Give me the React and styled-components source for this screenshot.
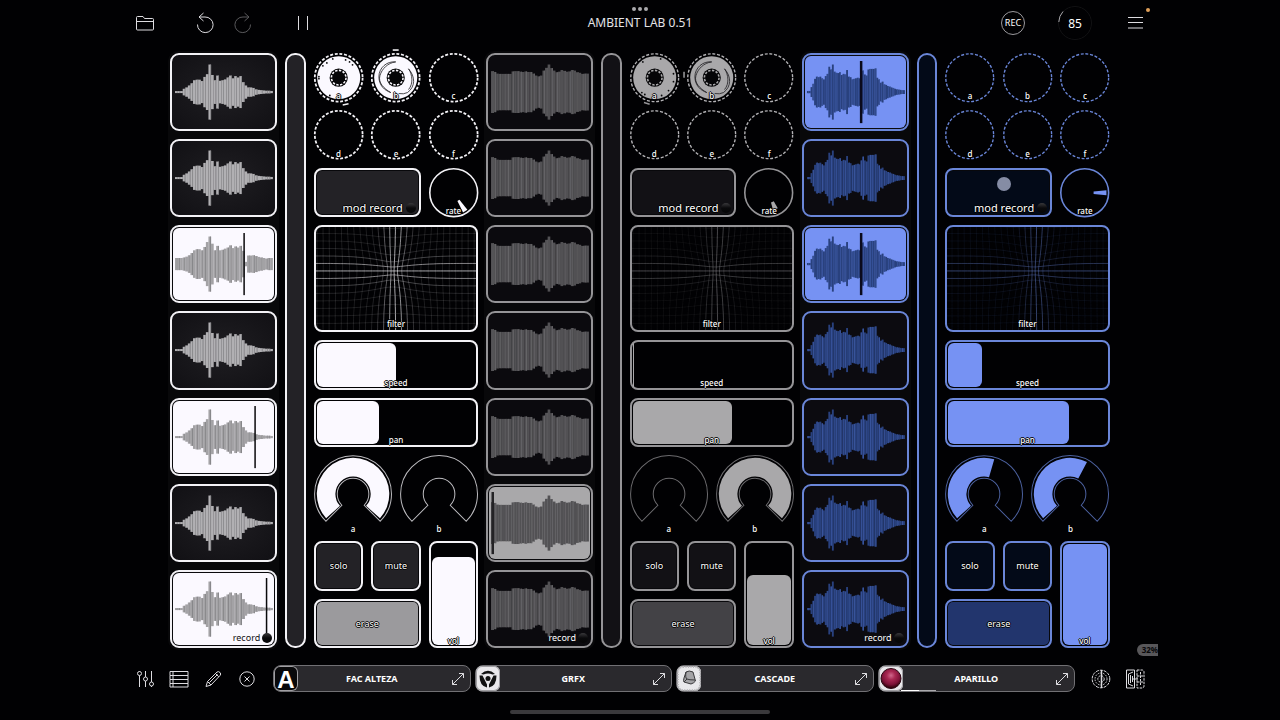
// App.jsx
import React, { useState } from 'react';
import styled, { createGlobalStyle, ThemeProvider } from 'styled-components';

const GlobalStyle = createGlobalStyle`
  * {
    box-sizing: border-box;
  }

  body {
    margin: 0;
    background: #000;
    color: #fff;
    font-family: 'Noto Sans', 'Open Sans', sans-serif;
  }

  button {
    margin: 0;
    padding: 0;
    border: none;
    background: none;
    color: inherit;
    font: inherit;
    cursor: pointer;
  }

  svg {
    display: block;
  }
`;

const themes = {
  white: {
    line: '#f3f2f6',
    thin: '#bdbcc0',
    fill: '#fbf9ff',
    button: '#232226',
    pad: 'radial-gradient(#1f1e22, #111014)',
    erase: '#9b9a9d',
    wave: '#b1b0b3',
    waveLow: '#7c7b7e',
    head: '#0a0a0c',
  },
  gray: {
    line: '#959497',
    thin: '#6c6b6e',
    fill: '#a9a8aa',
    button: '#121115',
    pad: '#0b0a0e',
    erase: '#434246',
    wave: '#525154',
    waveLow: '#6f6e71',
    head: '#242326',
  },
  blue: {
    line: '#6a86d8',
    thin: '#4c619f',
    fill: '#7692f3',
    button: '#030a18',
    pad: '#0c0b10',
    erase: '#22356d',
    wave: '#29417e',
    waveLow: '#3f5ca8',
    head: '#0a0a1c',
  },
};

const Page = styled.div`
  position: relative;
  display: flex;
  flex-direction: column;
  height: 100vh;
  min-height: 560px;
  background: #010103;
`;

const Header = styled.header`
  display: grid;
  grid-template-columns: 1fr auto 1fr;
  align-items: center;
  height: 49px;
  padding: 0 135px 3px;
`;

const Tools = styled.div`
  display: flex;
  align-items: center;
  justify-content: ${(props) => (props.$end ? 'flex-end' : 'flex-start')};
  gap: ${(props) => props.$gap};
`;

const IconButton = styled.button`
  width: 20px;
  height: 20px;
  opacity: ${(props) => (props.disabled ? 0.4 : 1)};

  svg {
    width: 20px;
    height: 20px;
    fill: none;
    stroke: #dddce0;
    stroke-width: 1;
    overflow: visible;
  }
`;

const Title = styled.h1`
  position: relative;
  margin: 0;
  color: #e4e3e7;
  font-size: 12px;
  font-weight: 400;
  line-height: 16px;
`;

const Dots = styled.span`
  position: absolute;
  top: -8px;
  left: 0;
  right: 0;
  display: flex;
  justify-content: center;
  gap: 2px;

  i {
    width: 4px;
    height: 4px;
    border-radius: 50%;
    background: #aaa9ad;
  }
`;

const RecButton = styled.button`
  width: 24px;
  height: 24px;
  border: 1px solid #9a999d;
  border-radius: 50%;
  font-size: 9px;
  line-height: 22px;
`;

const Tempo = styled.button`
  display: grid;
  place-items: center;
  width: 34px;
  height: 34px;
  font-size: 12px;

  > * {
    grid-area: 1 / 1;
  }
`;

const MicDot = styled.span`
  position: absolute;
  top: 8px;
  right: 130px;
  width: 4px;
  height: 4px;
  border-radius: 50%;
  background: #e0a05a;
`;

const Stage = styled.main`
  flex: 1;
  display: grid;
  grid-template-columns: repeat(3, minmax(0, 1fr));
  grid-template-rows: minmax(0, 1fr);
  width: 74%;
  min-height: 0;
  margin: 0 auto;
`;

const Strip = styled.section`
  display: grid;
  grid-template-columns: 4fr 1fr 6fr;
  grid-template-rows: minmax(0, 1fr);
`;

const Pads = styled.div`
  display: grid;
  grid-template-rows: repeat(7, minmax(0, 1fr));
  gap: 8px;
  margin: 2px;
  padding: 2px;
  border-radius: 10px;
  background: #08080a;
`;

const PadButton = styled.button`
  position: relative;
  padding: 1px;
  border: 2px solid ${(props) => props.theme.line};
  border-radius: 9px;
  background: ${(props) => (props.$active ? '#0a0a0d' : props.theme.pad)};
`;

const PadFace = styled.span`
  display: block;
  height: 100%;
  border-radius: 6px;
  background: ${(props) => (props.$active ? props.theme.fill : 'transparent')};

  svg {
    width: 100%;
    height: 100%;
  }
`;

const PadLabel = styled.span`
  position: absolute;
  right: 3px;
  bottom: 3px;
  display: flex;
  align-items: center;
  gap: 2px;
  font-size: 9px;
  line-height: 10px;
  color: ${(props) => (props.$dark ? '#111' : '#fff')};
`;

const Ball = styled.i`
  width: 10px;
  height: 10px;
  border-radius: 50%;
  background: linear-gradient(#39383b, #0a0a0c 50%, #050506);
`;

const Lane = styled.div`
  margin: 4px;
  border: 2px solid ${(props) => props.theme.line};
  border-radius: 10px;
  background: ${(props) => props.theme.button};
`;

const Controls = styled.div`
  display: grid;
  grid-template-columns: repeat(6, minmax(0, 1fr));
  grid-template-rows:
    repeat(3, minmax(0, 2fr)) minmax(0, 4fr) repeat(2, minmax(0, 2fr))
    minmax(0, 3fr) repeat(2, minmax(0, 2fr));

  > * {
    grid-column: span 2;
    min-width: 0;
    min-height: 0;
    margin: 4px;
  }
`;

const Label = styled.span`
  align-self: end;
  justify-self: center;
  font-size: 8px;
  font-weight: 500;
  line-height: ${(props) => (props.$tall ? '12px' : '9px')};
  text-shadow: 1px 0 #000, -1px 0 #000, 0 1px #000, 0 -1px #000;
  pointer-events: none;
`;

const Dial = styled.button`
  display: grid;
  grid-template-rows: minmax(0, 1fr);

  > * {
    grid-area: 1 / 1;
  }

  svg {
    width: 100%;
    height: 100%;
    overflow: visible;
  }
`;

const Box = styled.button`
  position: relative;
  && {
    grid-column: span ${(props) => props.$span || 2};
  }
  border: 2px solid ${(props) => props.theme.line};
  border-radius: 8px;
  background: ${(props) => (props.$erase ? props.theme.erase : props.theme.button)};
  box-shadow: inset 0 0 0 1px #08080b;
  font-size: 9px;
  text-shadow: 1px 0 #000, -1px 0 #000, 0 1px #000, 0 -1px #000;
`;

const ModLabel = styled(PadLabel)`
  bottom: 0;
  gap: 3px;
  font-size: 11px;
  line-height: 14px;
`;

const Touch = styled.i`
  position: absolute;
  top: 15%;
  left: 48%;
  width: 14px;
  height: 14px;
  border-radius: 50%;
  background: #858ca4;
`;

const FilterBox = styled.div`
  && {
    grid-column: span 6;
  }
  display: grid;
  grid-template-rows: minmax(0, 1fr);
  overflow: hidden;
  border: 2px solid ${(props) => props.theme.line};
  border-radius: 8px;

  > * {
    grid-area: 1 / 1;
  }

  svg {
    width: 100%;
    height: 100%;
  }
`;

const SliderBox = styled.label`
  && {
    grid-column: span ${(props) => (props.$vertical ? 2 : 6)};
    grid-row: span ${(props) => (props.$vertical ? 2 : 1)};
  }
  display: grid;
  grid-template-rows: minmax(0, 1fr);
  padding: 1px;
  border: 2px solid ${(props) => props.theme.line};
  border-radius: 8px;

  > * {
    grid-area: 1 / 1;
  }
`;

const Fill = styled.span`
  align-self: end;
  border-radius: 6px;
  background: ${(props) => props.theme.fill};
`;

const Range = styled.input`
  width: 100%;
  height: 100%;
  min-width: 0;
  margin: 0;
  opacity: 0;
  writing-mode: ${(props) => (props.$vertical ? 'vertical-lr' : 'horizontal-tb')};
  direction: ${(props) => (props.$vertical ? 'rtl' : 'ltr')};
`;

const KnobBox = styled.label`
  && {
    grid-column: span 3;
  }
  display: grid;
  grid-template-rows: minmax(0, 1fr);

  > * {
    grid-area: 1 / 1;
  }

  svg {
    width: 100%;
    height: 100%;
    overflow: visible;
  }
`;

const Footer = styled.footer`
  display: flex;
  align-items: center;
  gap: 16px;
  height: 68px;
  padding: 0 135px 15px;
`;

const Tabs = styled.nav`
  flex: 1;
  display: grid;
  grid-template-columns: repeat(4, 1fr);
  gap: 4px;
`;

const Tab = styled.button`
  position: relative;
  display: grid;
  grid-template-columns: 24px 1fr 24px;
  align-items: center;
  height: 27px;
  border: 1px solid #717074;
  border-radius: 8px;
  background: #2a292d;
  font-size: 9px;
  font-weight: 700;

  > svg {
    justify-self: center;
    width: 14px;
    height: 14px;
  }
`;

const AppIcon = styled.span`
  display: grid;
  place-items: center;
  width: 24px;
  height: 25px;
  border-radius: 6px;
  background: ${(props) => (props.$dark ? '#08080a' : '#e9e8eb')};
  box-shadow: inset 0 0 0 1px #a09fa3;
  font-family: 'Liberation Sans', sans-serif;
  font-size: 24px;
  line-height: 28px;
`;

const Progress = styled.i`
  position: absolute;
  bottom: 0;
  left: 22px;
  width: 35px;
  height: 1px;
  background: linear-gradient(90deg, #fff 50%, #aaa9ad 50%);
`;

const Battery = styled.span`
  position: absolute;
  right: 122px;
  bottom: 64px;
  padding-left: 5px;
  border-radius: 6px 0 0 6px;
  background: #58575a;
  color: #08080a;
  font-size: 8px;
  font-weight: 700;
  line-height: 12px;
`;

const HomeBar = styled.i`
  position: absolute;
  bottom: 6px;
  left: 50%;
  width: 260px;
  height: 4px;
  margin-left: -130px;
  border-radius: 2px;
  background: #3a393c;
`;

// half heights of the bars, out of 100
const waves = {
  white: [
    3, 3, 3, 12, 17, 24, 32, 43, 45, 45, 40, 55, 65, 100, 62, 43, 60, 41, 43, 46, 53, 60, 50, 58, 53, 58, 36,
    24, 17, 17, 15, 10, 8, 7, 6, 5, 5, 4,
  ],
  held: [
    22, 22, 22, 24, 27, 32, 40, 50, 54, 54, 50, 62, 80, 100, 74, 50, 66, 50, 52, 56, 60, 68, 58, 64, 60, 66, 48,
    8, 31, 31, 32, 29, 26, 24, 22, 20, 22, 22,
  ],
  gray: [
    76, 73, 67, 66, 66, 66, 66, 66, 75, 76, 76, 74, 73, 75, 73, 73, 67, 60, 57, 60, 78, 88, 100, 87, 78, 72, 74,
    80, 77, 74, 75, 80, 78, 72, 70, 66, 67, 67,
  ],
  blue: [
    4, 4, 18, 30, 48, 56, 54, 56, 50, 46, 58, 66, 92, 82, 100, 74, 70, 69, 72, 62, 66, 64, 80, 56, 54, 46, 48,
    50, 52, 50, 64, 78, 64, 60, 82, 84, 84, 84, 86, 52, 46, 34, 38, 28, 26, 22, 20, 17, 15, 12, 10, 9, 8, 7, 7,
  ],
};

const Wave = ({ kind, tone, head, headWidth = 1.5, active }) => {
  const bars = waves[kind];
  const step = 98 / bars.length;
  const theme = themes[tone];
  return (
    <svg viewBox="0 0 101 72" preserveAspectRatio="none" aria-hidden="true">
      {bars.map((value, i) => {
        const h = Math.max(1, value * 0.275);
        const x = 2 + i * step;
        const dark = active && tone === 'white';
        return (
          <g key={i}>
            <rect x={x} y={36 - h} width={step + 0.1} height={h * 2} fill={dark ? '#a3a2a5' : theme.wave} />
            {(i * 7) % 5 < 3 && (
              <rect x={x + step - 0.7} y={36 - h} width="0.7" height={h * 2} fill={theme.waveLow} />
            )}
          </g>
        );
      })}
      {head !== undefined && <rect x={head} y="5" width={headWidth} height="62" fill={theme.head} />}
    </svg>
  );
};

const strips = [
  {
    tone: 'white',
    pads: [
      {},
      {},
      { active: true, head: 70.5, kind: 'held' },
      {},
      { active: true, head: 81.5 },
      {},
      { active: true, head: 93 },
    ],
    discs: true,
    ticks: [[7, 27, -12], [0, -28, 0]],
    rate: 58,
    warp: 76,
    speed: 50,
    pan: 39,
    a: 1,
    b: 0,
    vol: 87,
  },
  {
    tone: 'gray',
    pads: [{}, {}, {}, {}, {}, { active: true, head: 2.5, headWidth: 2.5 }, {}],
    discs: true,
    ticks: [[-8, 26, 16], [-28, -3, 90]],
    rate: 68,
    warp: 82,
    speed: 1,
    pan: 63,
    a: 0,
    b: 1,
    vol: 69,
  },
  {
    tone: 'blue',
    pads: [{ active: true, head: 55, headWidth: 2.5 }, {}, { active: true, head: 55, headWidth: 2.5 }, {}, {}, {}, {}],
    ticks: [],
    rate: 0,
    warp: 86,
    touch: true,
    speed: 21,
    pan: 76,
    a: 0.567,
    b: 0.61,
    vol: 100,
  },
];

const discDots = {
  white: [[-16, -12], [-12, -15], [-6, -19], [7, -18], [11, -16], [14, -13], [-20, 1], [-20, -1], [-9, 18]],
  gray: [[-12, -16], [6, -19], [19, -4], [19, 4], [14, 13], [7, 18], [-13, 15], [-10, 17]],
};

const ModCircle = ({ name, strip, index }) => {
  const t = themes[strip.tone];
  const disc = strip.discs && index < 2;
  const tick = strip.ticks[index];
  return (
    <Dial aria-label={`modulator ${name}`}>
      <svg viewBox="-25 -25 50 50" aria-hidden="true">
        {disc && <circle r="21.8" fill={t.fill} />}
        {disc && <circle r="9.2" fill="#050507" />}
        {disc && <circle r="7.4" fill="none" stroke={t.fill} strokeWidth="1.6" strokeDasharray="2.4 1.475" />}
        {disc && index === 0 &&
          discDots[strip.tone].map(([x, y]) => <circle key={`${x},${y}`} cx={x} cy={y} r="0.9" fill="#08080a" />)}
        {disc && index === 1 && (
          <g fill="none" stroke="#1c1b1e" strokeWidth="0.8">
            <path d="M0-16C-9-17-17-10-17-1S-11 13-5 15" />
            <path d="M0-16C-8-15-14-9-16-2S-12 11-5 15" />
            <path d="M13-9C20-1 20 9 12 15Q8 17 3 16" />
            <path d="M13-9C17-3 18 6 13 12" />
          </g>
        )}
        <circle
          r="24.2"
          fill="none"
          stroke={strip.tone === 'gray' ? '#b4b3b6' : t.line}
          strokeWidth={strip.tone === 'white' ? 1.8 : 1.4}
          strokeDasharray="3 1.751"
        />
        {tick && (
          <rect
            x="-3"
            y="-0.8"
            width="6"
            height="1.6"
            fill={t.line}
            transform={`translate(${tick[0]} ${tick[1]}) rotate(${tick[2]})`}
          />
        )}
      </svg>
      <Label $tall>{name}</Label>
    </Dial>
  );
};

const FilterGrid = ({ tone, cx }) => {
  const cy = 44;
  const pull = (x, y) => {
    const r2 = (x - cx) ** 2 + (y - cy) ** 2;
    const k = 1 - 0.5 * Math.exp(-r2 / 900);
    return `${(cx + (x - cx) * k).toFixed(1)},${(cy + (y - cy) * k).toFixed(1)}`;
  };
  const strength = tone === 'white' ? 1 : 0.7;
  const alpha = (d) => strength * (0.14 + 0.72 * Math.exp(-(d * d) / 170));
  const lines = [];
  for (let i = -16; i <= 16; i += 1) {
    const x = cx + 3 + i * 6;
    const y = cy + i * 7.5;
    const down = [];
    const across = [];
    for (let s = -4; s <= 110; s += 3) down.push(pull(x, s));
    for (let s = -4; s <= 166; s += 3) across.push(pull(s, y));
    lines.push(<polyline key={`v${i}`} points={down.join(' ')} strokeOpacity={alpha(Math.abs(i) * 6)} />);
    lines.push(<polyline key={`h${i}`} points={across.join(' ')} strokeOpacity={alpha(Math.abs(i) * 7.5)} />);
  }
  return (
    <svg viewBox="0 0 159 103" preserveAspectRatio="none" aria-hidden="true">
      <g fill="none" stroke={themes[tone].line} strokeWidth="0.8">
        {lines}
      </g>
    </svg>
  );
};

const Slider = ({ name, value, vertical }) => {
  const [current, setCurrent] = useState(value);
  return (
    <SliderBox $vertical={vertical}>
      <Fill style={vertical ? { height: `${current}%` } : { width: `${current}%`, height: '100%' }} />
      <Range type="range" $vertical={vertical} value={current} onChange={(e) => setCurrent(Number(e.target.value))} />
      <Label>{name}</Label>
    </SliderBox>
  );
};

const ring = (from, to, outer, inner) => {
  const at = (deg, r) => {
    const a = (deg * Math.PI) / 180;
    return `${(Math.cos(a) * r).toFixed(2)} ${(Math.sin(a) * r).toFixed(2)}`;
  };
  const large = to - from > 180 ? 1 : 0;
  return `M${at(from, outer)}A${outer} ${outer} 0 ${large} 1 ${at(to, outer)}L${at(to, inner)}A${inner} ${inner} 0 ${large} 0 ${at(from, inner)}Z`;
};

const Knob = ({ name, value, tone }) => {
  const [current, setCurrent] = useState(value);
  const t = themes[tone];
  return (
    <KnobBox>
      <svg viewBox="-39 -39 78 78" aria-hidden="true">
        <path d={ring(135, 405, 38.4, 15.8)} fill="none" stroke={t.thin} strokeWidth="1" />
        {current > 0 && <path d={ring(138, 135 + current * 267, 36.2, 17.6)} fill={t.fill} />}
      </svg>
      <Range
        type="range"
        min="0"
        max="1"
        step="0.001"
        value={current}
        onChange={(e) => setCurrent(Number(e.target.value))}
      />
      <Label>{name}</Label>
    </KnobBox>
  );
};

const StripView = ({ strip }) => {
  const t = themes[strip.tone];
  return (
    <ThemeProvider theme={t}>
      <Strip>
        <Pads>
          {strip.pads.map((pad, i) => (
            <PadButton key={i} $active={pad.active} aria-label={i === 6 ? 'record' : `pad ${i + 1}`}>
              <PadFace $active={pad.active}>
                <Wave kind={strip.tone} tone={strip.tone} {...pad} />
              </PadFace>
              {i === 6 && (
                <PadLabel $dark={pad.active}>
                  record
                  <Ball />
                </PadLabel>
              )}
            </PadButton>
          ))}
        </Pads>
        <Lane />
        <Controls>
          {['a', 'b', 'c', 'd', 'e', 'f'].map((name, i) => (
            <ModCircle key={name} name={name} index={i} strip={strip} />
          ))}
          <Box $span={4}>
            {strip.touch && <Touch />}
            <ModLabel>
              mod record
              <Ball />
            </ModLabel>
          </Box>
          <Dial aria-label="rate">
            <svg viewBox="-25 -25 50 50" aria-hidden="true">
              <circle r="24.2" fill="none" stroke={t.line} strokeWidth="1.6" />
              <path
                d={strip.tone === 'gray' ? 'M10-1.5 18-2.6V2.6L10 1.5Z' : 'M9-1.2 22-2.6V2.6L9 1.2Z'}
                fill={t.fill}
                transform={`rotate(${strip.rate})`}
              />
            </svg>
            <Label $tall>rate</Label>
          </Dial>
          <FilterBox>
            <FilterGrid tone={strip.tone} cx={strip.warp} />
            <Label $tall>filter</Label>
          </FilterBox>
          <Slider name="speed" value={strip.speed} />
          <Slider name="pan" value={strip.pan} />
          <Knob name="a" value={strip.a} tone={strip.tone} />
          <Knob name="b" value={strip.b} tone={strip.tone} />
          <Box>solo</Box>
          <Box>mute</Box>
          <Slider name="vol" value={strip.vol} vertical />
          <Box $span={4} $erase>
            erase
          </Box>
        </Controls>
      </Strip>
    </ThemeProvider>
  );
};

const Expand = () => (
  <svg viewBox="0 0 14 14" fill="none" stroke="#dddce0" strokeWidth="1" aria-hidden="true">
    <path d="M1.5 12.5 12.5 1.5M8 1.5h4.500v4.500M1.500 8v4.500h4.500" />
  </svg>
);

const GrfxLogo = () => (
  <svg width="24" height="25" viewBox="0 0 24 25" aria-hidden="true">
    <path d="M5 8Q12 1.500 19 8L16.500 8.500Q12 6.500 7.500 8.500Z" fill="#111" />
    <path
      d="M3.500 9.500 6.500 9.500 11 18.500V21.500Q3.500 20 3.500 9.500ZM20.500 9.500 17.500 9.500 13 18.500V21.500Q20.500 20 20.500 9.500Z"
      fill="#111"
    />
    <circle cx="12" cy="12.500" r="2.500" fill="#111" />
  </svg>
);

const CascadeLogo = () => (
  <svg width="24" height="25" viewBox="0 0 24 25" aria-hidden="true">
    <rect x="1" y="1" width="22" height="23" rx="5" fill="none" stroke="#b9b8bb" strokeWidth="2" strokeDasharray="1 1.500" />
    <path d="M9 6Q12 4 16 6L18.500 15Q17 17 14 18L7 16Q6 15 7 12Z" fill="#a4a3a6" stroke="#39383b" />
    <path d="M9 6Q8 12 10 13T18 14M10 13 7 16" fill="none" stroke="#39383b" />
  </svg>
);

const AparilloLogo = () => (
  <svg width="24" height="25" viewBox="0 0 24 25" aria-hidden="true">
    <defs>
      <radialGradient id="ball" cx="0.5" cy="0.35" r="0.6">
        <stop offset="0" stopColor="#d0688c" />
        <stop offset="0.35" stopColor="#a92852" />
        <stop offset="0.75" stopColor="#7d1238" />
        <stop offset="1" stopColor="#36040f" />
      </radialGradient>
    </defs>
    <circle cx="12" cy="12.500" r="10" fill="url(#ball)" stroke="#2b0712" />
  </svg>
);

const plugins = [
  { name: 'FAC ALTEZA', icon: 'A', dark: true },
  { name: 'GRFX', icon: <GrfxLogo /> },
  { name: 'CASCADE', icon: <CascadeLogo /> },
  { name: 'APARILLO', icon: <AparilloLogo />, progress: true },
];

const App = () => (
  <Page>
    <GlobalStyle />
    <Header>
      <Tools $gap="40px">
        <IconButton aria-label="Files">
          <svg viewBox="0 0 20 20">
            <path d="M1.500 16V4.500Q1.500 3.500 2.500 3.500H8L9.500 5.500H17.500Q18.500 5.500 18.500 6.500V16Q18.500 17 17.500 17H2.500Q1.500 17 1.500 16ZM1.500 8.500H18.500" />
          </svg>
        </IconButton>
        <Tools $gap="18px">
          <IconButton aria-label="Undo">
            <svg viewBox="0 0 20 20">
              <path d="M2.500 11.500A7.800 7.800 0 1 0 10 4H4.500M8.500 0 4 4 8.500 8" />
            </svg>
          </IconButton>
          <IconButton aria-label="Redo" disabled>
            <svg viewBox="0 0 20 20">
              <path d="M17.500 11.500A7.800 7.800 0 1 1 10 4H15.500M11.500 0 16 4 11.500 8" />
            </svg>
          </IconButton>
        </Tools>
        <IconButton aria-label="Pause">
          <svg viewBox="0 0 20 20">
            <path d="M5.500 3V17M14.500 3V17" />
          </svg>
        </IconButton>
      </Tools>
      <Title>
        <Dots>
          <i />
          <i />
          <i />
        </Dots>
        AMBIENT LAB 0.51
      </Title>
      <Tools $end $gap="33px">
        <RecButton>REC</RecButton>
        <Tempo>
          <svg width="34" height="34" viewBox="0 0 34 34" fill="none" aria-hidden="true">
            <circle cx="17" cy="17" r="16.500" stroke="#111113" />
            <path d="M.8 16A16.500 16.500 0 0 1 5 5.500" stroke="#a5a4a8" />
          </svg>
          <span>85</span>
        </Tempo>
        <IconButton aria-label="Menu">
          <svg viewBox="0 0 20 20">
            <path d="M3 4.500H18M3 9.500H18M3 15H18" />
          </svg>
        </IconButton>
      </Tools>
      <MicDot />
    </Header>
    <Stage>
      {strips.map((strip) => (
        <StripView key={strip.tone} strip={strip} />
      ))}
    </Stage>
    <Footer>
      <Tools $gap="14px">
        <IconButton aria-label="Mixer">
          <svg viewBox="0 0 20 20">
            <path d="M4.500 6.500V18M4.500 2V2.500M10.500 2V8M10.500 12V18M16.500 2V13M16.500 17V18" />
            <circle cx="4.500" cy="4.500" r="2" />
            <circle cx="10.500" cy="10" r="2" />
            <circle cx="16.500" cy="15" r="2" />
          </svg>
        </IconButton>
        <IconButton aria-label="List">
          <svg viewBox="0 0 20 20">
            <path d="M1 2.500H19V6.500H1ZM1 6.500H19V10.500H1ZM1 10.500H19V14.500H1ZM1 14.500H19V18H1ZM4 2.500V18" />
          </svg>
        </IconButton>
        <IconButton aria-label="Edit">
          <svg viewBox="0 0 20 20">
            <path d="M3 17.500 4.500 12.500 14 3Q15.500 2 17 3.500T17 6.500L8 16ZM4.500 12.500 8 16M12.500 4.500 15.800 7.800M6.500 13.500 14.500 5.500" />
          </svg>
        </IconButton>
        <IconButton aria-label="Clear">
          <svg viewBox="0 0 20 20">
            <circle cx="10" cy="10" r="7.200" />
            <path d="M7.500 7.500 12.500 12.500M12.500 7.500 7.500 12.500" />
          </svg>
        </IconButton>
      </Tools>
      <Tabs>
        {plugins.map((plugin) => (
          <Tab key={plugin.name}>
            <AppIcon $dark={plugin.dark}>{plugin.icon}</AppIcon>
            <span>{plugin.name}</span>
            <Expand />
            {plugin.progress && <Progress />}
          </Tab>
        ))}
      </Tabs>
      <Tools $gap="14px">
        <IconButton aria-label="Tuning">
          <svg viewBox="0 0 20 20">
            <circle cx="10" cy="10" r="8.800" strokeDasharray="3 1" />
            <circle cx="10" cy="10" r="6" strokeDasharray="1.500 1.200" />
            <circle cx="10" cy="10" r="3.200" strokeDasharray="2 1" />
            <path d="M10.500 1V19" strokeWidth="1.500" />
          </svg>
        </IconButton>
        <IconButton aria-label="Layout">
          <svg viewBox="0 0 20 20">
            <path d="M1.500 1H9.500V19H1.500ZM3.500 5V15M5.500 6V14M3.500 5 8 3M3.500 15 8 17M7.500 7V13" />
            <path d="M12 1H17Q19 1 19 3V17Q19 19 17 19H12ZM12 7H19M12 13H19M15.500 3V17" strokeDasharray="2.500 1" />
            <path d="M8 10H13" />
          </svg>
        </IconButton>
      </Tools>
    </Footer>
    <Battery>32%</Battery>
    <HomeBar />
  </Page>
);

export default App;
